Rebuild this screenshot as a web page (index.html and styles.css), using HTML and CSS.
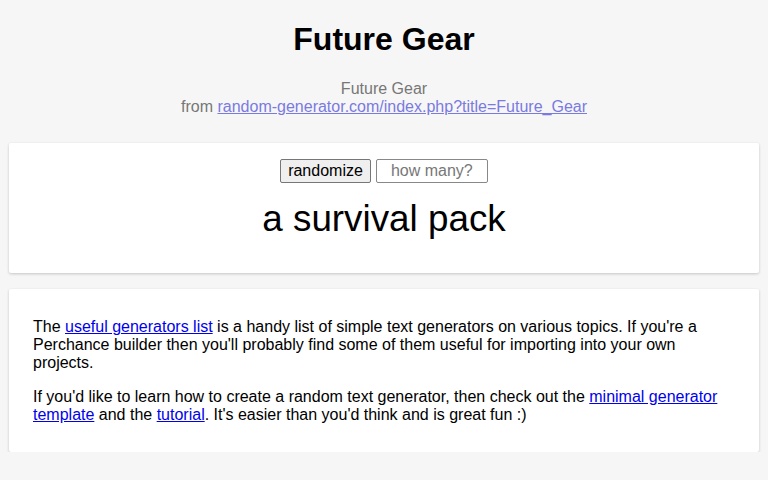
FILE: index.html
```html
<!DOCTYPE html>
<html lang="en">
<head>
    <meta charset="UTF-8">
    <meta name="viewport" content="width=device-width, initial-scale=1.0">
    <title>Future Gear</title>
    <link rel="stylesheet" href="styles.css">
</head>
<body>
    <h1>Future Gear</h1>
    <div class="subtitle">
        Future Gear<br>
        from <a href="#">random-generator.com/index.php?title=Future_Gear</a>
    </div>

    <div class="card generator">
        <div class="controls">
            <button>randomize</button>
            <input type="text" placeholder="how many?">
        </div>
        <div class="output">a survival pack</div>
    </div>

    <div class="card info">
        <p>The <a href="#">useful generators list</a> is a handy list of simple text generators on various topics. If you're a Perchance builder then you'll probably find some of them useful for importing into your own projects.</p>
        <p>If you'd like to learn how to create a random text generator, then check out the <a href="#">minimal generator template</a> and the <a href="#">tutorial</a>. It's easier than you'd think and is great fun :)</p>
    </div>
</body>
</html>
```

FILE: styles.css
```css
body {
    font-family: "Liberation Sans", Arial, sans-serif;
    background: #f6f6f6;
    margin: 0;
    padding: 0 9px;
    color: #000;
}
h1 {
    text-align: center;
    font-size: 32px;
    margin: 21px 0 22px;
}
.subtitle {
    text-align: center;
    color: #777;
    font-size: 16px;
    line-height: 18px;
    margin-bottom: 27px;
}
.subtitle a {
    color: #7a7ae0;
}
.card {
    background: white;
    border-radius: 2px;
    box-shadow: 0 1px 3px rgba(0, 0, 0, 0.2);
}
.generator {
    padding: 16px 0 33px;
    text-align: center;
    margin-bottom: 16px;
}
.controls {
    display: flex;
    justify-content: center;
    gap: 5px;
    height: 24px;
}
.controls button {
    font-family: inherit;
    font-size: 16px;
    padding: 0 7px;
    background: #efefef;
    border: 1px solid #767676;
    border-radius: 2px;
    color: #000;
}
.controls input {
    font-family: inherit;
    font-size: 16px;
    width: 112px;
    box-sizing: border-box;
    text-align: center;
    border: 1px solid #888;
    border-radius: 2px;
    padding: 0 4px;
}
.controls input::placeholder {
    color: #777;
}
.output {
    font-size: 36.8px;
    margin-top: 15px;
    line-height: 42px;
}
.info {
    padding: 13px 24px 12px;
    font-size: 16px;
    line-height: 18px;
}
.info p {
    margin: 16px 0;
}
.info a {
    color: #0000ee;
}
```
